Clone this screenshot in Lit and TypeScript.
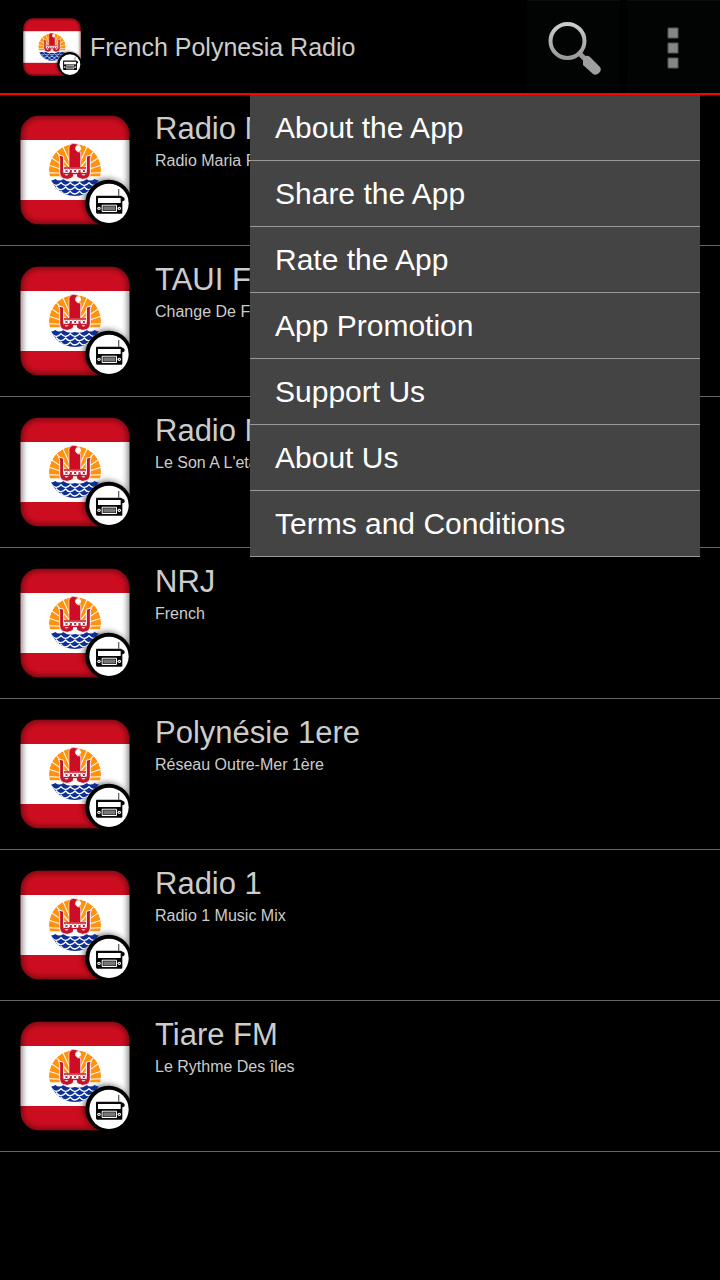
import { LitElement, html, css, svg } from "lit";
import { customElement, property, state } from "lit/decorators.js";

interface Station {
  name: string;
  note: string;
}

const STATIONS: Station[] = [
  { name: "Radio Maria", note: "Radio Maria French" },
  { name: "TAUI FM", note: "Change De Fréquence" },
  { name: "Radio Maohi", note: "Le Son A L'etat Pur" },
  { name: "NRJ", note: "French" },
  { name: "Polynésie 1ere", note: "Réseau Outre-Mer 1ère" },
  { name: "Radio 1", note: "Radio 1 Music Mix" },
  { name: "Tiare FM", note: "Le Rythme Des îles" },
];

const MENU = [
  "About the App",
  "Share the App",
  "Rate the App",
  "App Promotion",
  "Support Us",
  "About Us",
  "Terms and Conditions",
];

// White gaps between the sun's rays, in degrees from straight up.
const RAY_GAPS = [-88, -72, -56, -40, -24, -8, 8, 24, 40, 56, 72, 88];

// A row of swells whose crests point upwards.
const swells = (x: number, y: number) => {
  let d = `M${x} ${y}`;
  for (let i = 0; i < 8; i++) d += "q7 9 14 8t14 -8";
  return d;
};

/** Rounded flag tile with the radio badge in its corner. */
@customElement("flag-icon")
class FlagIcon extends LitElement {
  static styles = css`
    :host {
      display: block;
      flex: none;
    }
    svg {
      display: block;
      width: 100%;
      height: 100%;
      overflow: visible;
    }
  `;

  render() {
    return html`
      <svg viewBox="30 30 330 330" aria-hidden="true">
        <defs>
          <clipPath id="tile"><rect x="32" y="32" width="326" height="326" rx="54" /></clipPath>
          <clipPath id="sky"><path d="M110 110H280V214H110Z" /></clipPath>
          <clipPath id="sea"><path d="M110 221Q124 231 136 222Q148 231 160 222Q175 235 195 228Q215 235 230 222Q242 231 254 222Q266 231 280 221V280H110Z" /></clipPath>
          <clipPath id="disc"><circle cx="195" cy="195" r="78" /></clipPath>
          <filter id="soft" x="-20%" y="-20%" width="140%" height="140%">
            <feGaussianBlur stdDeviation="9" />
          </filter>
        </defs>
        <g clip-path="url(#tile)">
          <rect x="30" y="30" width="330" height="330" fill="#cc0d1f" />
          <rect x="30" y="105" width="330" height="180" fill="#fff" />
          <rect
            x="28" y="28" width="334" height="334" rx="56"
            fill="none" stroke="#000" stroke-opacity=".6" stroke-width="16" filter="url(#soft)"
          />
          <circle cx="290" cy="290" r="68" fill="#000" opacity=".6" filter="url(#soft)" />
        </g>
        <g clip-path="url(#disc)">
          <g clip-path="url(#sky)">
            <circle cx="195" cy="195" r="78" fill="#ff930f" />
            ${RAY_GAPS.map(
              (a) => svg`<path d="M195 190V100" stroke="#fff" stroke-width="3" transform="rotate(${a} 195 206)" />`,
            )}
          </g>
          <g clip-path="url(#sea)" fill="none" stroke="#fff" stroke-width="4">
            <rect x="110" y="215" width="170" height="65" fill="#0c3094" stroke="none" />
            <path d=${swells(97, 233)} />
            <path d=${swells(111, 246)} />
            <path d=${swells(97, 259)} />
          </g>
        </g>
        <path d="M160 188H230V214H160Z" fill="#fff" />
        <path
          d="M146 150L161 154V196Q161 211 172 210Q178 205 174 201Q184 196 190 205Q193 216 183 220Q172 226 160 221Q148 215 149 200V160Z"
          fill="#c3142a" stroke="#fff" stroke-width="3"
        />
        <path
          d="M244 150L229 154V196Q229 211 218 210Q212 205 216 201Q206 196 200 205Q197 216 207 220Q218 226 230 221Q242 215 241 200V160Z"
          fill="#c3142a" stroke="#fff" stroke-width="3"
        />
        <path
          d="M177 188V126Q180 116 190 115L206 118Q194 123 197 134Q201 143 212 141V188Z"
          fill="#cc0d24" stroke="#fff" stroke-width="2"
        />
        <circle cx="205" cy="130" r="8" fill="#fff" />
        <path d="M162 187H228V191H162ZM162 204H228V208H162Z" fill="#c3142a" />
        <path
          d="M166 194l7 8m0-8l-7 8M179 194l7 8m0-8l-7 8M192 194l7 8m0-8l-7 8M205 194l7 8m0-8l-7 8M218 194l7 8m0-8l-7 8"
          stroke="#a01428" stroke-width="3" fill="none"
        />
        <circle cx="296" cy="294" r="70" fill="#000" />
        <circle cx="297" cy="295" r="59" fill="#fff" />
        <path d="M326 252V272" stroke="#666" stroke-width="4" />
        <path d="M260 272H333Q336 275 340 276Q345 278 344 285Q341 289 337 289V323Q337 326 334 326H262Q258 326 258 322V276Q258 272 260 272Z" fill="#080808" />
        <rect x="264" y="279" width="68" height="15" fill="#fff" />
        <rect x="275" y="299" width="46" height="22" rx="3" fill="#fff" />
        <rect x="279" y="303" width="38" height="14" fill="#777" stroke="#111" stroke-width="2" />
        <circle cx="267" cy="310" r="5" fill="#fff" />
        <circle cx="267" cy="310" r="2" fill="#111" />
        <circle cx="328" cy="310" r="5" fill="#fff" />
        <circle cx="328" cy="310" r="2" fill="#111" />
      </svg>
    `;
  }
}

@customElement("station-row")
class StationRow extends LitElement {
  static styles = css`
    :host {
      display: block;
    }
    .row {
      display: flex;
      gap: 25px;
      padding: 20px;
      border-bottom: 1px solid #666;
      color: #ccc;
      text-decoration: none;
    }
    .icon {
      width: 110px;
      height: 110px;
    }
    .text {
      min-width: 0;
      margin-top: -4px;
    }
    .name {
      font-size: 31px;
      line-height: 36px;
    }
    .note {
      margin-top: 5px;
      font-size: 16px;
      line-height: 18px;
    }
  `;

  @property({ attribute: false }) station!: Station;

  render() {
    return html`
      <a class="row" href="#">
        <flag-icon class="icon"></flag-icon>
        <div class="text">
          <div class="name">${this.station.name}</div>
          <div class="note">${this.station.note}</div>
        </div>
      </a>
    `;
  }
}

@customElement("app-root")
class AppRoot extends LitElement {
  static styles = css`
    :host {
      display: block;
      min-height: 100vh;
      background: #000;
      color: #ccc;
      font-family: "Liberation Sans", Arial, sans-serif;
    }
    .bar {
      position: relative;
      display: flex;
      align-items: center;
      gap: 7px;
      height: 93px;
      border-bottom: 2px solid #f00;
    }
    .brand {
      display: flex;
      flex: 1;
      align-items: center;
      gap: 9px;
      min-width: 0;
      padding-left: 23px;
    }
    .logo {
      width: 58px;
      height: 58px;
    }
    .title {
      margin: 0;
      font-size: 25px;
      font-weight: 400;
      line-height: 30px;
      white-space: nowrap;
    }
    .action {
      box-sizing: border-box;
      width: 93px;
      height: 93px;
      padding: 0;
      border: 0;
      border-top: 1px solid #0b0d0d;
      background: #020404;
    }
    .action svg {
      display: block;
      width: 100%;
      height: 100%;
    }
    .menu {
      position: absolute;
      z-index: 1;
      top: 95px;
      right: 20px;
      width: 450px;
      max-width: calc(100% - 20px);
      background: #444;
    }
    .item {
      display: block;
      width: 100%;
      padding: 16px 25px 15px;
      border: 0;
      border-bottom: 1px solid #999;
      background: none;
      color: #fff;
      font-family: inherit;
      font-size: 30px;
      line-height: 34px;
      text-align: left;
    }
    .list {
      margin: 0;
      padding: 0;
      list-style: none;
    }
  `;

  @state() private open = true;

  render() {
    return html`
      <header class="bar">
        <div class="brand">
          <flag-icon class="logo"></flag-icon>
          <h1 class="title">French Polynesia Radio</h1>
        </div>
        <button class="action" aria-label="Search">
          <svg viewBox="0 0 93 92">
            <defs>
              <linearGradient id="metal" x1="0" y1="0" x2="0" y2="1">
                <stop offset="0" stop-color="#ccc" />
                <stop offset="1" stop-color="#999" />
              </linearGradient>
            </defs>
            <path d="M51 51L58 58" stroke="#999" stroke-width="5" />
            <circle cx="40.500" cy="40" r="17" fill="none" stroke="url(#metal)" stroke-width="4" />
            <path
              d="M56 59Q56 56 58 55Q61 54 63 56L73 66Q75 69 72 72Q69 75 66 73L56 64Z"
              fill="#a0a0a0"
            />
          </svg>
        </button>
        <button
          class="action"
          aria-label="More options"
          aria-expanded=${this.open}
          @click=${() => (this.open = !this.open)}
        >
          <svg viewBox="0 0 93 92">
            <path
              d="M41 27h10v10h-10zM41 42h10v10h-10zM41 57h10v10h-10z"
              fill="#868686" stroke="#555" stroke-width="1"
            />
          </svg>
        </button>
        ${this.open
          ? html`<nav class="menu" aria-label="Options">
              ${MENU.map((label) => html`<button class="item">${label}</button>`)}
            </nav>`
          : null}
      </header>
      <ul class="list">
        ${STATIONS.map((s) => html`<li><station-row .station=${s}></station-row></li>`)}
      </ul>
    `;
  }
}
